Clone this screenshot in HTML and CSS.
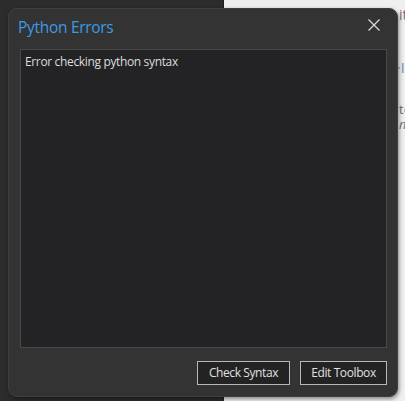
FILE: index.html
```html
<!DOCTYPE html>
<html>
<head>
<meta charset="utf-8">
<link rel="stylesheet" href="styles.css">
</head>
<body>
<div class="app">
  <div class="left-pane"></div>
  <div class="divider"></div>
  <div class="right-pane">
    <div class="bg-line l1">it</div>
    <div class="bg-line l2"><span class="dot">·</span>I</div>
    <div class="bg-line l3">te</div>
    <div class="bg-line l4">m</div>
  </div>
</div>

<div class="dialog">
  <div class="dialog-header">
    <span class="dialog-title">Python Errors</span>
    <button class="close-btn" aria-label="Close">
      <svg width="14" height="14" viewBox="0 0 14 14"><path d="M1.5 1.5 L12.5 12.5 M12.5 1.5 L1.5 12.5" stroke="#d8d8d8" stroke-width="1.3" fill="none"/></svg>
    </button>
  </div>
  <div class="output">Error checking python syntax</div>
  <div class="dialog-footer">
    <button class="btn btn-check">Check Syntax</button>
    <button class="btn btn-edit">Edit Toolbox</button>
  </div>
</div>
</body>
</html>
```
FILE: styles.css
```css
html, body {
  margin: 0;
  padding: 0;
  width: 405px;
  height: 401px;
  overflow: hidden;
  font-family: "Open Sans", "Noto Sans", "Liberation Sans", sans-serif;
}

.app {
  display: flex;
  width: 405px;
  height: 401px;
}

.left-pane {
  width: 223px;
  background: #2c2c2c;
}

.divider {
  width: 1px;
  background: #1f1f1f;
}

.right-pane {
  flex: 1;
  background: #efefef;
  padding-left: 164px;
  overflow: hidden;
  white-space: nowrap;
  font-size: 13px;
  color: #707070;
}

.bg-line { height: 12px; line-height: 12px; }
.l1 { margin-top: 9px; padding-left: 11px; color: #7d7068; font-size: 14px; }
.l2 { margin-top: 41px; padding-left: 9px; color: #6d8bb8; font-size: 14px; }
.l2 .dot { color: #8aa0c0; }
.l3 { margin-top: 29px; padding-left: 11px; }
.l4 { margin-top: 3px; padding-left: 11px; font-style: italic; }

.dialog {
  position: absolute;
  left: 8px;
  top: 8px;
  width: 388px;
  height: 387px;
  background: #333333;
  border: 1px solid #3e3e3e;
  border-radius: 9px;
  box-shadow: 1px 2px 4px rgba(0, 0, 0, 0.45);
  display: flex;
  flex-direction: column;
}

.dialog-header {
  height: 40px;
  display: flex;
  align-items: center;
  justify-content: space-between;
  padding: 0 16px 0 9px;
  box-sizing: border-box;
}

.dialog-title {
  color: #3b9ae6;
  font-size: 15.5px;
  letter-spacing: -0.3px;
  margin-top: -4px;
}

.close-btn {
  background: none;
  border: none;
  padding: 0;
  width: 14px;
  height: 14px;
  margin-top: -8px;
  display: flex;
}

.output {
  margin: 0 10px 0 11px;
  height: 299px;
  background: #232325;
  border: 1px solid #484848;
  color: #dcdcdc;
  font-size: 12px;
  letter-spacing: -0.35px;
  padding: 3px 4px;
  box-sizing: border-box;
}

.dialog-footer {
  display: flex;
  justify-content: flex-end;
  gap: 10px;
  padding: 13px 10px 0 0;
}

.btn {
  height: 24px;
  background: #232323;
  border: 1px solid #b8b8b8;
  color: #e0e0e0;
  font-family: "Open Sans", "Noto Sans", "Liberation Sans", sans-serif;
  font-size: 12px;
  letter-spacing: -0.4px;
  white-space: nowrap;
  padding: 0;
  line-height: 20px;
}
.btn-check { width: 93px; }
.btn-edit { width: 87px; }
```
